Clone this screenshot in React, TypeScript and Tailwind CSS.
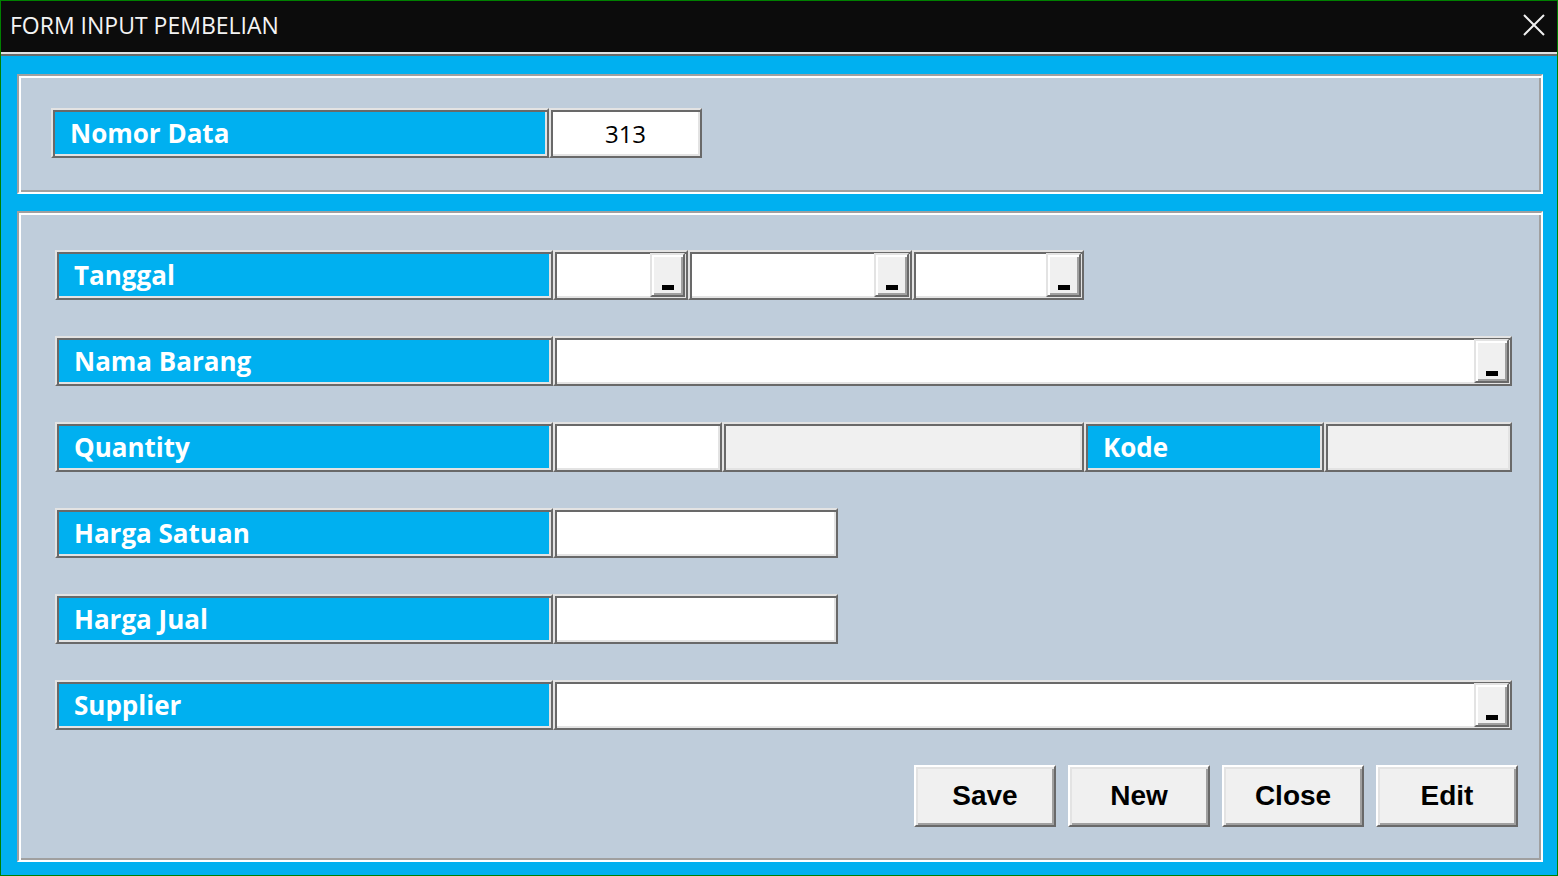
import React from "react";

const raisedIn =
  "border-2 border-t-[#e3e3e3] border-l-[#e3e3e3] border-b-[#696969] border-r-[#696969] shadow-[inset_2px_2px_0_#696969,inset_-2px_-2px_0_#e3e3e3]";

const etched =
  "border-2 border-t-[#a0a0a0] border-l-[#a0a0a0] border-b-white border-r-white shadow-[inset_2px_2px_0_#ffffff,inset_-2px_-2px_0_#a0a0a0]";

function Label({ text, w = "w-[498px]" }: { text: string; w?: string }) {
  return (
    <div
      className={`${w} h-[50px] shrink-0 bg-[#00b0f0] ${raisedIn} flex items-center pl-[17px] text-white font-bold text-[26px] font-['Open_Sans',sans-serif]`}
    >
      {text}
    </div>
  );
}

function DropButton() {
  return (
    <div className="w-[35px] h-full shrink-0 bg-[#f0f0f0] border-2 border-t-[#e3e3e3] border-l-[#e3e3e3] border-b-[#696969] border-r-[#696969] shadow-[inset_2px_2px_0_#ffffff,inset_-2px_-2px_0_#a0a0a0] flex items-end justify-center pb-[5px]">
      <div className="w-[12px] h-[5px] bg-black" />
    </div>
  );
}

function Field({
  w,
  gray = false,
  drop = false,
}: {
  w: string;
  gray?: boolean;
  drop?: boolean;
}) {
  return (
    <div
      className={`${w} h-[50px] shrink-0 ${gray ? "bg-[#f0f0f0]" : "bg-white"} ${raisedIn} flex items-stretch justify-end pr-[1px] py-[1px]`}
    >
      {drop && <DropButton />}
    </div>
  );
}

function ActionButton({ text }: { text: string }) {
  return (
    <button className="w-[142px] h-[62px] bg-[#f0f0f0] border-2 border-t-white border-l-white border-b-[#696969] border-r-[#696969] shadow-[inset_2px_2px_0_#e3e3e3,inset_-2px_-2px_0_#a0a0a0] text-black font-bold text-[28px] font-['Liberation_Sans',Arial,sans-serif]">
      {text}
    </button>
  );
}

export default function App() {
  return (
    <div className="w-[1558px] h-[876px] border border-[#008000] flex flex-col bg-[#00b0f0] overflow-hidden">
      <div className="h-[51px] shrink-0 bg-[#0c0c0c] flex items-center justify-between pl-[9px] pr-[12px] pb-[3px]">
        <span className="text-[#f4f4f4] text-[23px] font-['Open_Sans',sans-serif] leading-none">
          FORM INPUT PEMBELIAN
        </span>
        <svg width="22" height="22" viewBox="0 0 22 22">
          <path d="M1 1 L21 21 M21 1 L1 21" stroke="#f0f0f0" strokeWidth="2" />
        </svg>
      </div>
      <div className="h-[2px] shrink-0 bg-[#e3e3e3]" />
      <div className="h-[2px] shrink-0 bg-[#6a6a6a]" />

      <div className="flex-1 flex flex-col pl-[16px] pr-[14px] pt-[18px] gap-[17px]">
        <div className={`h-[120px] shrink-0 bg-[#bfcddb] ${etched} pl-[32px] pt-[32px]`}>
          <div className="flex">
            <Label text="Nomor Data" />
            <div
              className={`w-[153px] h-[50px] bg-white ${raisedIn} flex items-center justify-center pt-[2px] text-[24px] text-black font-['Open_Sans',sans-serif]`}
            >
              313
            </div>
          </div>
        </div>

        <div className={`h-[651px] shrink-0 bg-[#bfcddb] ${etched} pl-[36px] pt-[37px] pr-[23px] flex flex-col items-start`}>
          <div className="flex flex-col gap-[36px]">
            <div className="flex">
              <Label text="Tanggal" />
              <Field w="w-[135px]" drop />
              <Field w="w-[224px]" drop />
              <Field w="w-[172px]" drop />
            </div>
            <div className="flex">
              <Label text="Nama Barang" />
              <Field w="w-[959px]" drop />
            </div>
            <div className="flex">
              <Label text="Quantity" />
              <Field w="w-[169px]" />
              <Field w="w-[362px]" gray />
              <Label text="Kode" w="w-[240px]" />
              <Field w="w-[188px]" gray />
            </div>
            <div className="flex">
              <Label text="Harga Satuan" />
              <Field w="w-[285px]" />
            </div>
            <div className="flex">
              <Label text="Harga Jual" />
              <Field w="w-[285px]" />
            </div>
            <div className="flex">
              <Label text="Supplier" />
              <Field w="w-[959px]" drop />
            </div>
          </div>
          <div className="self-end flex gap-[12px] mt-[35px]">
            <ActionButton text="Save" />
            <ActionButton text="New" />
            <ActionButton text="Close" />
            <ActionButton text="Edit" />
          </div>
        </div>
      </div>
    </div>
  );
}
